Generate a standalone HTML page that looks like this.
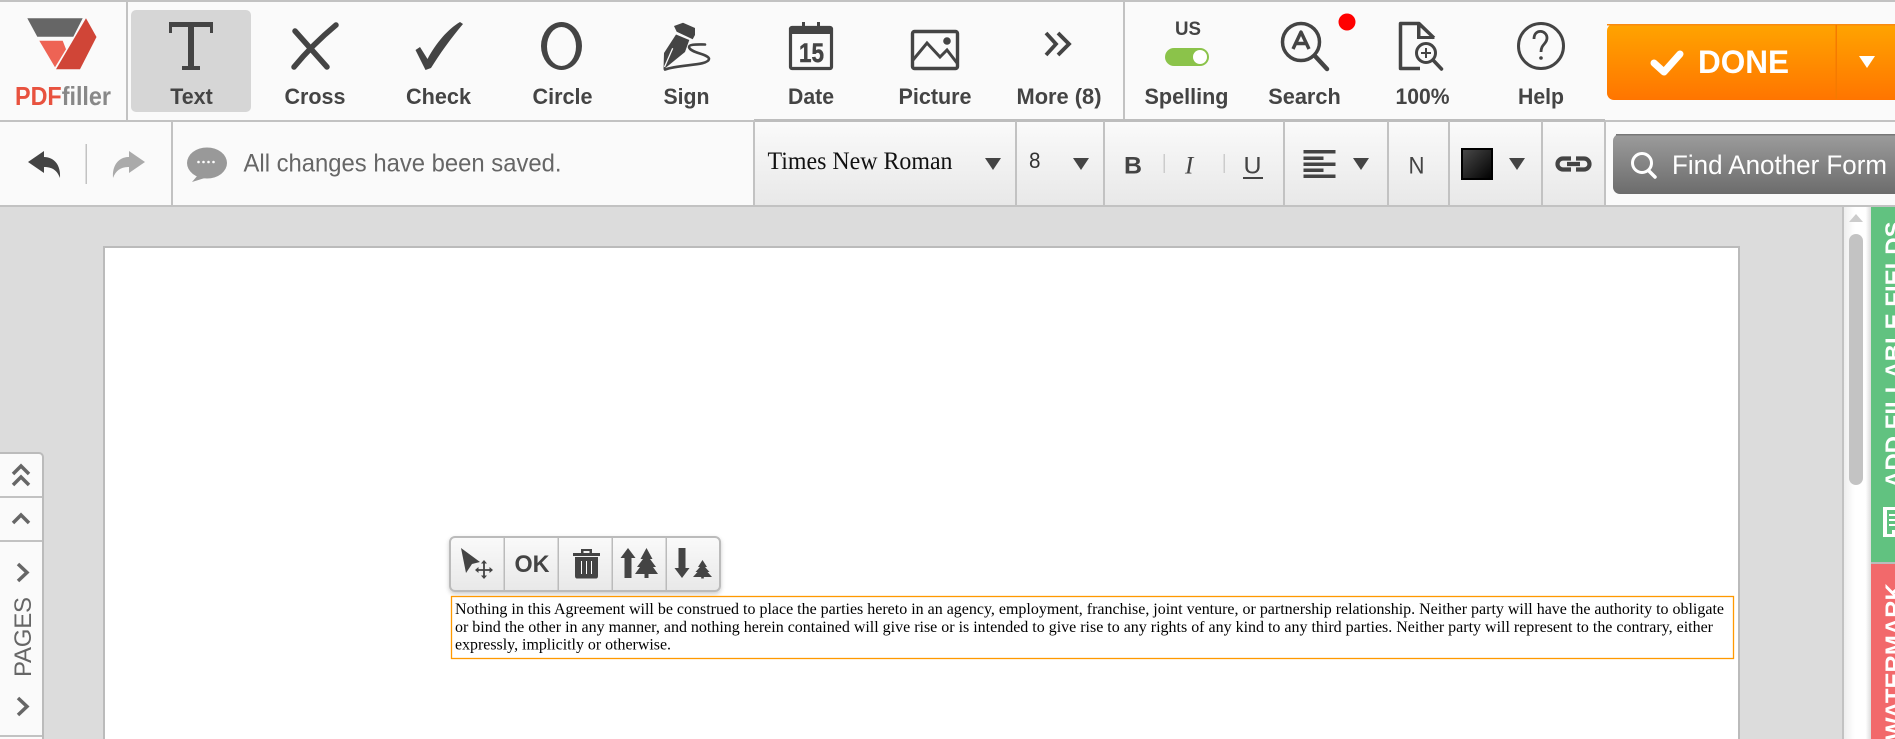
<!DOCTYPE html>
<html><head><meta charset="utf-8"><title>PDFfiller</title>
<style>
html,body{margin:0;padding:0;width:1895px;height:739px;overflow:hidden;background:#fafafa}
svg{display:block;position:absolute;left:0;top:0}
text{font-family:"Liberation Sans",sans-serif}
.l{font-size:22.5px;font-weight:bold;fill:#444;text-anchor:middle}
.i{fill:#444}
.s{fill:none;stroke:#444}
.p{font-family:"Liberation Serif",serif;font-size:15.6px;fill:#000}
</style></head><body>
<svg width="1895" height="739" viewBox="0 0 1895 739" xmlns="http://www.w3.org/2000/svg">
<defs>
<linearGradient id="g1" x1="0" y1="0" x2="0" y2="1"><stop offset="0" stop-color="#fafafa"/><stop offset="1" stop-color="#e8e8e8"/></linearGradient>
<linearGradient id="g2" x1="0" y1="0" x2="0" y2="1"><stop offset="0" stop-color="#ffa400"/><stop offset="1" stop-color="#ff7500"/></linearGradient>
<linearGradient id="g3" x1="0" y1="0" x2="0" y2="1"><stop offset="0" stop-color="#9c9c9c"/><stop offset="1" stop-color="#6c6c6c"/></linearGradient>
<linearGradient id="g4" x1="0" y1="0" x2="1" y2="1"><stop offset="0" stop-color="#4a4a4a"/><stop offset="1" stop-color="#000"/></linearGradient>
<linearGradient id="g5" x1="0" y1="0" x2="1" y2="0"><stop offset="0" stop-color="#eee"/><stop offset=".4" stop-color="#fff"/><stop offset=".8" stop-color="#fff"/><stop offset="1" stop-color="#ddd"/></linearGradient>
<filter id="sh" x="-5%" y="-10%" width="110%" height="130%"><feDropShadow dx="0" dy="2" stdDeviation="2" flood-color="#000" flood-opacity=".2"/></filter>
</defs>

<!-- backgrounds -->
<rect width="1895" height="739" fill="#dcdcdc"/>
<rect width="1895" height="206" fill="#fafafa"/>
<rect y="0" width="1895" height="2" fill="#c2c2c2"/>
<rect y="120" width="1895" height="2" fill="#c2c2c2"/>
<rect x="126" y="1" width="2" height="120" fill="#c2c2c2"/>
<rect x="1123" y="1" width="2" height="119" fill="#c2c2c2"/>
<rect x="171" y="121" width="2" height="85" fill="#c2c2c2"/>

<!-- format toolbar -->
<rect x="754" y="121" width="851" height="85" fill="url(#g1)"/>
<rect x="754" y="119" width="851" height="3" fill="#bdbdbd"/>
<rect x="753" y="120" width="2" height="86" fill="#c2c2c2"/>
<rect x="1015" y="121" width="2" height="85" fill="#c2c2c2"/>
<rect x="1103" y="121" width="2" height="85" fill="#c2c2c2"/>
<rect x="1283" y="121" width="2" height="85" fill="#c2c2c2"/>
<rect x="1387" y="121" width="2" height="85" fill="#c2c2c2"/>
<rect x="1448" y="121" width="2" height="85" fill="#c2c2c2"/>
<rect x="1541" y="121" width="2" height="85" fill="#c2c2c2"/>
<rect x="1604" y="121" width="2" height="85" fill="#c2c2c2"/>
<rect y="205" width="1895" height="2" fill="#c2c2c2"/>

<!-- logo -->
<path d="M27.3 18.3H82.7L73.3 36.7H37.3Z" fill="#666"/>
<path d="M86 18.3L96.5 37L80 69.3H56Z" fill="#d04537"/>
<path d="M39.3 40.7H62.7L66 49.3L55 67.3Z" fill="#ee6354"/>
<text x="15" y="105" font-size="26" font-weight="bold" fill="#e8523f" textLength="96" lengthAdjust="spacingAndGlyphs">PDF<tspan fill="#888">filler</tspan></text>

<!-- Text -->
<rect x="131" y="10" width="120" height="102" rx="5" fill="#d6d6d6"/>
<path class="i" d="M169 22H213V33H210V27H194V66H200V70H182V66H188V27H172V33H169Z"/>
<text class="l" x="191.5" y="104" textLength="42.5" lengthAdjust="spacingAndGlyphs">Text</text>
<!-- Cross -->
<path class="s" stroke-width="5.5" stroke-linecap="round" d="M295 31L327 67"/>
<path class="s" stroke-width="5.5" stroke-linecap="round" d="M336 25Q312 45 294 67"/>
<text class="l" x="315" y="104" textLength="61" lengthAdjust="spacingAndGlyphs">Cross</text>
<!-- Check -->
<path class="i" d="M415.5 50L420 47L427.5 59C436 43 448 29 460 22L463 24C451 38 439 55 431 68L425.5 70Z"/>
<text class="l" x="438.5" y="104" textLength="65" lengthAdjust="spacingAndGlyphs">Check</text>
<!-- Circle -->
<path class="i" fill-rule="evenodd" d="M541 46a20.5 24 0 1 0 41 0a20.5 24 0 1 0 -41 0ZM547 46.5a14.5 19.5 0 1 1 29 0a14.5 19.5 0 1 1 -29 0Z"/>
<text class="l" x="562.5" y="104" textLength="60" lengthAdjust="spacingAndGlyphs">Circle</text>
<!-- Sign -->
<path class="i" d="M674 26L683 22.7L695 28V35L692.7 39.3L676.7 31.7Z"/>
<path class="i" d="M676 34.5L689.3 40L685 52L663.5 69.5L664 53Z"/>
<path d="M664.5 67L672.7 48.3" stroke="#fafafa" stroke-width="1.3" fill="none"/>
<path d="M665 69.5C680 64 708 66 709 59C709 54 690 53 689 47C689 44 697 44.5 705 44.5" fill="none" stroke="#444" stroke-width="2.6" stroke-linecap="round"/>
<text class="l" x="686.5" y="104" textLength="46" lengthAdjust="spacingAndGlyphs">Sign</text>
<!-- Date -->
<rect x="790.5" y="27.5" width="41" height="41" rx="1.5" fill="none" stroke="#444" stroke-width="3.2"/>
<rect x="790" y="27" width="42" height="7" fill="#444"/>
<rect x="802" y="22" width="3" height="10" fill="#444"/>
<rect x="817" y="22" width="3" height="10" fill="#444"/>
<text x="799" y="62" font-size="27" font-weight="bold" fill="#444" stroke="#444" stroke-width=".5" textLength="25" lengthAdjust="spacingAndGlyphs">15</text>
<text class="l" x="811" y="104" textLength="46" lengthAdjust="spacingAndGlyphs">Date</text>
<!-- Picture -->
<rect x="912.5" y="31.5" width="45" height="37" rx="2" fill="none" stroke="#444" stroke-width="3.4"/>
<path class="s" stroke-width="3" d="M913 60L927 43L940 57L947 50L957 63"/>
<circle class="i" cx="947" cy="41" r="3.8"/>
<text class="l" x="935" y="104" textLength="73" lengthAdjust="spacingAndGlyphs">Picture</text>
<!-- More -->
<path class="s" stroke-width="3.8" d="M1046 33L1056 44L1046 55M1058 33L1069 44L1058 55"/>
<text class="l" x="1059" y="104" textLength="85" lengthAdjust="spacingAndGlyphs">More (8)</text>
<!-- Spelling -->
<text x="1188" y="35" font-size="19" font-weight="bold" fill="#444" text-anchor="middle" textLength="26" lengthAdjust="spacingAndGlyphs">US</text>
<rect x="1165" y="48" width="44" height="18" rx="9" fill="#8bc34a"/>
<circle cx="1200" cy="57" r="7" fill="#fff"/>
<text class="l" x="1186.5" y="104" textLength="84" lengthAdjust="spacingAndGlyphs">Spelling</text>
<!-- Search -->
<circle class="s" cx="1301" cy="42" r="18.5" stroke-width="3.5"/>
<path class="s" stroke-width="4.5" stroke-linecap="round" d="M1315 56L1327 69"/>
<path class="s" stroke-width="3.4" stroke-linejoin="round" d="M1293 49L1301 32L1309 49M1296 43.5H1306"/>
<circle cx="1347" cy="22" r="8.5" fill="#f00"/>
<text class="l" x="1304.5" y="104" textLength="72.5" lengthAdjust="spacingAndGlyphs">Search</text>
<!-- 100% -->
<path class="s" stroke-width="3.5" stroke-linejoin="round" d="M1420 68.5H1400.5V23.5H1419L1434 38"/>
<path class="i" d="M1417 23L1435 39H1417Z"/>
<path d="M1420.5 27.5L1429.5 36H1420.5Z" fill="#fafafa"/>
<circle cx="1426" cy="53" r="9.5" fill="#fafafa" stroke="#444" stroke-width="3"/>
<path class="s" stroke-width="3.5" stroke-linecap="round" d="M1433 60L1441.5 69"/>
<path class="s" stroke-width="2" d="M1421 53H1431M1426 48V58"/>
<text class="l" x="1422.5" y="104" textLength="54" lengthAdjust="spacingAndGlyphs">100%</text>
<!-- Help -->
<circle class="s" cx="1541" cy="46" r="22.5" stroke-width="3"/>
<path class="s" stroke-width="2.8" d="M1534 39C1534 28 1547 30 1547 38C1547 44 1541 44 1541 52"/>
<circle class="i" cx="1541" cy="58" r="1.8"/>
<text class="l" x="1541" y="104" textLength="46" lengthAdjust="spacingAndGlyphs">Help</text>

<!-- Done -->
<rect x="1607" y="24" width="300" height="76" rx="7" fill="url(#g2)"/>
<rect x="1607" y="24" width="288" height="1.5" fill="#f98a10"/>
<rect x="1835.5" y="25" width="1.5" height="74" fill="#f57a00"/>
<path d="M1654 63L1664 72L1680 54" fill="none" stroke="#fff" stroke-width="7" stroke-linecap="round" stroke-linejoin="round"/>
<text x="1698" y="73" font-size="32" font-weight="bold" fill="#fff" textLength="91" lengthAdjust="spacingAndGlyphs">DONE</text>
<path d="M1859 56H1875L1867 68Z" fill="#fff"/>

<!-- undo/redo -->
<path class="i" d="M28 162L44 151V157C54 157 61 165 60 178C57 170 52 167 44 167V173Z"/>
<rect x="85.5" y="144" width="1.5" height="40" fill="#c2c2c2"/>
<path d="M145 162L129 151V157C119 157 112 165 113 178C116 170 121 167 129 167V173Z" fill="#aaa"/>
<!-- chat -->
<ellipse cx="207" cy="163" rx="20" ry="15.5" fill="#999"/>
<path d="M198 175L192 182L208 177Z" fill="#999"/>
<g fill="#fff"><circle cx="198.5" cy="162" r="1.3"/><circle cx="203.5" cy="162" r="1.3"/><circle cx="208.5" cy="162" r="1.3"/><circle cx="213.5" cy="162" r="1.3"/></g>
<text x="243.5" y="171.5" font-size="25" fill="#666" textLength="318" lengthAdjust="spacingAndGlyphs">All changes have been saved.</text>

<!-- format items -->
<text x="767.5" y="169" font-size="25" fill="#111" style="font-family:'Liberation Serif',serif" textLength="185" lengthAdjust="spacingAndGlyphs">Times New Roman</text>
<path class="i" d="M985 158H1001L993 170Z"/>
<text x="1029" y="168" font-size="22" fill="#333" textLength="11.5" lengthAdjust="spacingAndGlyphs">8</text>
<path class="i" d="M1073 158H1089L1081 170Z"/>
<text x="1124" y="173.5" font-size="24" font-weight="bold" fill="#444" textLength="18" lengthAdjust="spacingAndGlyphs">B</text>
<rect x="1163.5" y="154" width="1.5" height="19" fill="#ccc"/>
<text x="1185" y="173.5" font-size="25" font-style="italic" fill="#444" style="font-family:'Liberation Serif',serif">I</text>
<rect x="1223.5" y="154" width="1.5" height="19" fill="#ccc"/>
<text x="1243.5" y="173.5" font-size="24" fill="#444" textLength="18" lengthAdjust="spacingAndGlyphs">U</text>
<rect x="1243" y="177" width="20" height="2" fill="#444"/>
<g fill="#444"><rect x="1303.5" y="150" width="32" height="3.5"/><rect x="1303.5" y="156.5" width="20" height="3.5"/><rect x="1303.5" y="162.5" width="32" height="3.5"/><rect x="1303.5" y="168.5" width="20" height="3.5"/><rect x="1303.5" y="174.5" width="32" height="3.5"/></g>
<path class="i" d="M1353 158H1369L1361 170Z"/>
<text x="1408.5" y="173.5" font-size="24" fill="#444" textLength="16" lengthAdjust="spacingAndGlyphs">N</text>
<rect x="1462" y="149" width="30" height="30" fill="url(#g4)" stroke="#000" stroke-width="2"/>
<path class="i" d="M1509 158H1525L1517 170Z"/>
<path class="s" stroke-width="4.2" d="M1571 158.500H1563a5.500 5.500 0 0 0 0 11H1571M1576 158.500H1584a5.500 5.500 0 0 1 0 11H1576M1567 164H1580"/>

<!-- Find button -->
<rect x="1613" y="134" width="300" height="60" rx="7" fill="url(#g3)"/>
<rect x="1616" y="134" width="280" height="1.5" fill="#777"/>
<circle cx="1642" cy="163" r="9.5" fill="none" stroke="#fff" stroke-width="3"/>
<path d="M1649 171L1655 177" stroke="#fff" stroke-width="3.5" stroke-linecap="round"/>
<text x="1672" y="174" font-size="27" fill="#fff" textLength="215" lengthAdjust="spacingAndGlyphs">Find Another Form</text>

<!-- page -->
<rect x="104" y="247" width="1635" height="500" fill="#fff" stroke="#bbb" stroke-width="2"/>

<!-- scrollbar -->
<rect x="1842" y="207" width="2" height="532" fill="#c2c2c2"/>
<rect x="1844" y="207" width="27" height="532" fill="url(#g5)"/>
<path d="M1849 222L1856 214L1863 222Z" fill="#ccc"/>
<rect x="1849" y="234" width="14" height="251" rx="7" fill="#c3c3c3"/>

<!-- side tabs -->
<svg x="1871" y="207" width="24" height="532" viewBox="1871 207 24 532">
<rect x="1871" y="207" width="24" height="355" fill="#61c280"/>
<rect x="1871" y="562" width="24" height="2" fill="#bbb"/>
<rect x="1871" y="564" width="24" height="175" fill="#f2696b"/>
<text transform="translate(1902,488) rotate(-90)" font-size="24" font-weight="bold" fill="#fff">ADD FILLABLE FIELDS</text>
<text transform="translate(1902,740) rotate(-90)" font-size="24" font-weight="bold" fill="#fff">WATERMARK</text>
<path d="M1883 507H1897V537H1883Z" fill="#fff"/>
<path d="M1887 510H1897V531H1892V534H1887Z" fill="#61c280"/>
<path d="M1889 515H1897M1889 520H1897M1889 525H1897" stroke="#fff" stroke-width="2"/>
<rect x="1892" y="530" width="5" height="7" fill="#fff"/>
</svg>

<!-- pages panel -->
<rect x="-5" y="453" width="48" height="300" rx="4" fill="#fafafa" stroke="#bbb" stroke-width="2"/>
<rect x="0" y="496" width="42" height="2" fill="#c2c2c2"/>
<rect x="0" y="540" width="42" height="2" fill="#c2c2c2"/>
<rect x="0" y="735" width="42" height="2" fill="#c2c2c2"/>
<path d="M13 474L21 466L29 474M13 485L21 477L29 485" fill="none" stroke="#666" stroke-width="3.5"/>
<path d="M13 523L21 515L29 523" fill="none" stroke="#666" stroke-width="3.5"/>
<path d="M18 564L27 572.5L18 581" fill="none" stroke="#666" stroke-width="3.5"/>
<text transform="translate(31,677) rotate(-90)" font-size="24" fill="#666" textLength="80">PAGES</text>
<path d="M18 698L27 706.5L18 715" fill="none" stroke="#666" stroke-width="3.5"/>

<!-- floating toolbar -->
<rect x="450" y="537" width="270" height="54" rx="5" fill="url(#g1)" stroke="#bbb" stroke-width="2" filter="url(#sh)"/>
<g fill="#bbb"><rect x="503.5" y="538" width="1.5" height="52"/><rect x="557.5" y="538" width="1.5" height="52"/><rect x="611.500" y="538" width="1.5" height="52"/><rect x="665.500" y="538" width="1.5" height="52"/></g>
<path class="i" d="M461 548L480 562L472 564L466 573Z"/>
<path class="s" stroke-width="1.8" d="M484 561.5V578M476 570H492"/>
<path class="i" d="M484 560L487 563.5H481ZM484 579L487 575.5H481ZM475 570L478.5 567V573ZM493 570L489.5 567V573Z"/>
<text x="532" y="572" font-size="24" font-weight="bold" fill="#444" text-anchor="middle" textLength="35" lengthAdjust="spacingAndGlyphs">OK</text>
<path class="i" d="M581 553V549H592V553H600V556H573V553ZM583.5 551V553H589.5V551Z"/>
<path class="i" d="M575 557H598V576Q598 578.5 596 578.5H577Q575 578.5 575 576Z"/>
<path d="M581.5 561V574M586.5 561V574M591.500 561V574" stroke="#fff" stroke-width="1"/>
<path class="i" d="M628 548L635.5 558H631.5V578H624.5V558H620.5Z"/>
<path class="i" d="M646.5 548L652.5 559H650L656 567H653L658 574H648.5V578H644.5V574H635L640 567H637L643 559H640.5Z"/>
<path class="i" d="M682 578L674.5 568H678.5V548H685.500V568H689.500Z"/>
<path class="i" d="M702.5 560L707 567H705L709.5 572H707.5L712 577H703.8V578.5H701.2V577H693L697.5 572H695.5L700 567H698Z"/>

<!-- text box -->
<rect x="451.5" y="596.5" width="1282" height="62" fill="#fff" stroke="#ff9900" stroke-width="1.3"/>
<text class="p" x="455" y="614" textLength="1269" lengthAdjust="spacingAndGlyphs">Nothing in this Agreement will be construed to place the parties hereto in an agency, employment, franchise, joint venture, or partnership relationship. Neither party will have the authority to obligate</text>
<text class="p" x="455" y="632" textLength="1258" lengthAdjust="spacingAndGlyphs">or bind the other in any manner, and nothing herein contained will give rise or is intended to give rise to any rights of any kind to any third parties. Neither party will represent to the contrary, either</text>
<text class="p" x="455" y="649.5" textLength="216" lengthAdjust="spacingAndGlyphs">expressly, implicitly or otherwise.</text>
</svg>
</body></html>
